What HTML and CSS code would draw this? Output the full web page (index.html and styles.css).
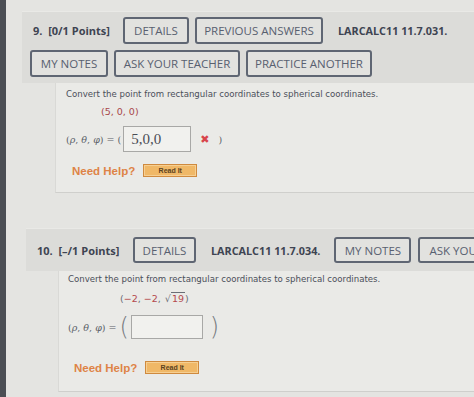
FILE: index.html
```html
<!DOCTYPE html>
<html>
<head>
<meta charset="utf-8">
<link rel="stylesheet" href="styles.css">
</head>
<body>
<div class="page">
  <section class="q q9">
    <div class="qhead">
      <div class="row">
        <span class="qnum">9.&nbsp; [0/1 Points]</span>
        <span class="btn b-details">DETAILS</span>
        <span class="btn b-prev">PREVIOUS ANSWERS</span>
        <span class="ref">LARCALC11 11.7.031.</span>
      </div>
      <div class="row row2">
        <span class="btn b-notes">MY NOTES</span>
        <span class="btn b-ask">ASK YOUR TEACHER</span>
        <span class="btn b-practice">PRACTICE ANOTHER</span>
      </div>
    </div>
    <div class="qbody">
      <p class="prompt">Convert the point from rectangular coordinates to spherical coordinates.</p>
      <p class="point p9">(5, 0, 0)</p>
      <div class="answer a9">
        <span class="math">(<i>ρ</i>, <i>θ</i>, <i>φ</i>) = (</span>
        <span class="input filled">5,0,0</span>
        <span class="wrong">✖</span>
        <span class="math close">)</span>
      </div>
      <div class="help h9">
        <span class="need">Need Help?</span>
        <span class="readit">Read It</span>
      </div>
    </div>
  </section>

  <section class="q q10">
    <div class="qhead">
      <div class="row">
        <span class="qnum">10.&nbsp; [–/1 Points]</span>
        <span class="btn b-details2">DETAILS</span>
        <span class="ref ref2">LARCALC11 11.7.034.</span>
        <span class="btn b-notes2">MY NOTES</span>
        <span class="btn b-ask2">ASK YOUR</span>
      </div>
    </div>
    <div class="qbody">
      <p class="prompt">Convert the point from rectangular coordinates to spherical coordinates.</p>
      <p class="point p10">(<span class="red">−2</span>, <span class="red">−2</span>, <span class="sqrt">√<span class="rad red">19</span></span>)</p>
      <div class="answer a10">
        <span class="math">(<i>ρ</i>, <i>θ</i>, <i>φ</i>) =</span>
        <span class="bigp">(</span>
        <span class="input empty"></span>
        <span class="bigp">)</span>
      </div>
      <div class="help h10">
        <span class="need">Need Help?</span>
        <span class="readit">Read It</span>
      </div>
    </div>
  </section>
</div>
</body>
</html>
```

FILE: styles.css
```css
html, body {
  margin: 0;
  padding: 0;
}
body {
  width: 474px;
  height: 397px;
  overflow: hidden;
  background: #e4e4e1;
}
.page {
  height: 397px;
  border-left: 6px solid #4b4e54;
  box-sizing: border-box;
  padding-top: 11px;
  font-family: "Open Sans", "DejaVu Sans", sans-serif;
  color: #3e4452;
}
.q9 .qhead {
  margin-left: 16px;
  background: #dcdcd9;
  padding: 5px 0 6px 8px;
  display: flex;
  flex-direction: column;
  gap: 6px;
  border-top: 1px solid #e9e9e6;
}
.row {
  display: flex;
  align-items: center;
}
.qnum {
  font-weight: 700;
  font-size: 11px;
  margin-left: 3px;
  width: 90px;
  white-space: nowrap;
}
.btn {
  box-sizing: border-box;
  height: 27px;
  border: 2px solid #5f6673;
  border-radius: 3px;
  display: inline-flex;
  align-items: center;
  justify-content: center;
  font-size: 11.5px;
  color: #586070;
  background: #e2e2df;
  white-space: nowrap;
}
.b-details { width: 66px; }
.b-prev { width: 128px; margin-left: 6px; }
.ref {
  font-weight: 700;
  font-size: 10.8px;
  margin-left: 15px;
  white-space: nowrap;
}
.b-notes { width: 78px; }
.b-ask { width: 126px; margin-left: 6px; }
.b-practice { width: 126px; margin-left: 6px; }

.qbody {
  background: #eaeae7;
  border-bottom: 1px solid #cfcfcc;
  border-left: 1px solid #d9d9d6;
  font-family: "DejaVu Sans", Verdana, sans-serif;
}
.q9 .qbody {
  margin-left: 49px;
  height: 110px;
  padding: 6px 0 0 10px;
  box-sizing: border-box;
}
.prompt {
  margin: 0;
  font-size: 8.6px;
  color: #4a4f5a;
  white-space: nowrap;
}
.point {
  margin: 0;
  font-size: 9.5px;
  color: #a8484a;
}
.p9 { margin: 7px 0 0 35px; }
.answer {
  display: flex;
  align-items: center;
}
.math {
  font-family: "DejaVu Serif", "Liberation Serif", serif;
  font-size: 9.5px;
  color: #5b5f68;
}
.math i { font-style: italic; }
.a9 { margin-top: 9px; }
.input {
  box-sizing: border-box;
  background: #f1f1ee;
  border: 1px solid #a8a8a6;
}
.filled {
  width: 68px;
  height: 26px;
  margin-left: 2px;
  font-family: "Liberation Serif", serif;
  font-size: 15px;
  color: #4a4d55;
  padding-left: 7px;
  display: flex;
  align-items: center;
}
.wrong {
  color: #d8454b;
  font-size: 11px;
  margin-left: 9px;
  font-family: "DejaVu Sans", sans-serif;
}
.close { margin-left: 9px; }
.help {
  display: flex;
  align-items: center;
}
.h9 { margin: 12px 0 0 6px; }
.need {
  font-family: "Liberation Sans", Arial, sans-serif;
  font-weight: 700;
  font-size: 11.5px;
  color: #de8346;
}
.readit {
  box-sizing: border-box;
  width: 54px;
  height: 13px;
  margin-left: 8px;
  background: #f0b867;
  border: 1px solid #cf8a3e;
  box-shadow: inset 0 0 0 1px #f6cf92;
  font-family: "Liberation Sans", Arial, sans-serif;
  font-weight: 700;
  font-size: 7px;
  color: #5b4322;
  display: flex;
  align-items: center;
  justify-content: center;
}

.q10 { margin-top: 35px; }
.q10 .qhead {
  margin-left: 20px;
  background: #dcdcd9;
  height: 42px;
  padding-left: 11px;
  display: flex;
  align-items: center;
  border-top: 1px solid #e9e9e6;
  overflow: hidden;
}
.q10 .qnum { width: 96px; margin-left: 0; }
.b-details2 { width: 63px; height: 26px; }
.ref2 { margin-left: 15px; }
.b-notes2 { width: 77px; height: 26px; margin-left: 14px; }
.b-ask2 { width: 90px; height: 26px; margin-left: 7px; justify-content: flex-start; padding-left: 9px; overflow: hidden; }

.q10 .qbody {
  margin-left: 52px;
  height: 121px;
  padding: 3px 0 0 9px;
  box-sizing: border-box;
}
.p10 {
  margin: 9px 0 0 52px;
  color: #6a6e76;
}
.red { color: #b5494c; }
.sqrt { margin-left: 1px; }
.rad {
  border-top: 1px solid #6a6e76;
  padding: 0 1px;
}
.a10 { margin-top: 8px; }
.bigp {
  font-family: "DejaVu Sans", sans-serif;
  font-weight: 300;
  font-size: 24px;
  color: #777a80;
  line-height: 30px;
  margin: 0 1px 0 3px;
}
.empty {
  width: 72px;
  height: 24px;
  margin-left: 1px;
  margin-right: 4px;
}
.h10 { margin: 19px 0 0 6px; }
```
